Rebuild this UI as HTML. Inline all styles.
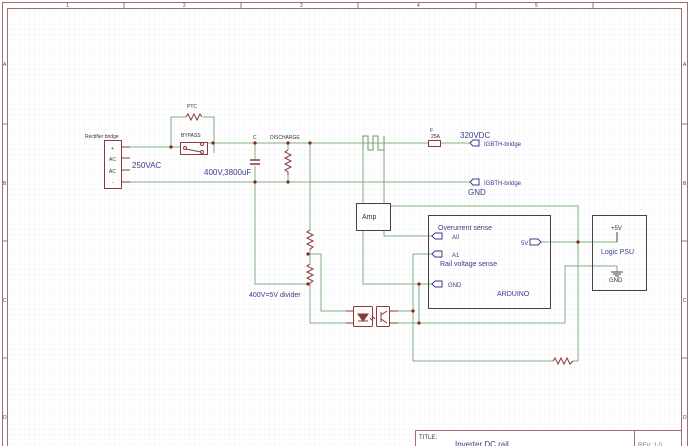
<!DOCTYPE html>
<html><head><meta charset="utf-8"><style>
html,body{margin:0;padding:0;background:#fff;width:690px;height:446px;overflow:hidden}
svg{display:block}
text{font-family:"Liberation Sans",sans-serif;fill:#3b3b8c}
</style></head><body>
<svg width="690" height="446" viewBox="0 0 690 446" xmlns="http://www.w3.org/2000/svg">
<defs>
<pattern id="g" width="5" height="5" patternUnits="userSpaceOnUse"><path d="M5 0V5M0 5H5" stroke="#eeeeee" stroke-width="0.6" fill="none"/></pattern>
</defs>
<rect width="690" height="446" fill="#fff"/>
<rect x="7" y="8" width="674" height="440" fill="url(#g)"/>
<!-- frame -->
<g stroke="#a07070" fill="none" stroke-width="1">
<rect x="2.5" y="2.5" width="685" height="450"/>
<rect x="7.5" y="8.5" width="674" height="440"/>
<path d="M124 3V8M241 3V8M358 3V8M476 3V8M593 3V8M3 124H7M3 241H7M3 358H7M682 124H687M682 241H687M682 358H687"/>
</g>
<g font-size="5" style="fill:#884444">
<text x="66" y="7">1</text><text x="183" y="7">2</text><text x="300" y="7">3</text><text x="417" y="7">4</text><text x="535" y="7">5</text>
<text x="3" y="66">A</text><text x="3" y="185">B</text><text x="3" y="302">C</text><text x="3" y="419">D</text>
<text x="683" y="66">A</text><text x="683" y="185">B</text><text x="683" y="302">C</text><text x="683" y="419">D</text>
</g>
<!-- wires -->
<g stroke="#7fb07f" fill="none" stroke-width="1">
<path d="M130 147H180M171 147V117H186M203 117H214V153M207 143H428M440 143H470"/>
<path d="M130 182H470"/>
<path d="M255 143V160M255 166V284H310"/>
<path d="M288 143V150M288 175V182"/>
<path d="M310 143V230M310 250V264M310 282V323H353"/>
<path d="M308 254H321V311H353"/>
<path d="M363 143V203M384 150V203"/>
<path d="M363 230V284H432M384 230V236H432"/>
<path d="M390 311H413V361H553M573 361H578V206H391"/>
<path d="M413 311V254H432"/>
<path d="M390 323H565V266H617M419 323V284"/>
<path d="M541 242H617V232"/>
<path d="M617 266V272"/>
</g>
<!-- coil -->
<path d="M363 150V136H368V150H373V136H378V150H384V136" stroke="#6a9a6a" fill="none"/>
<!-- components dark red -->
<g stroke="#8b3a3a" fill="none" stroke-width="1">
<rect x="104.5" y="140.5" width="17" height="48"/>
<path d="M122 147H130M122 158H130M122 170H130M122 182H130"/>
<path d="M186 117l2-3 3 6 3-6 3 6 3-6 2 3"/>
<rect x="180.5" y="142.5" width="27" height="12"/>
<circle cx="185" cy="148" r="1.5"/><circle cx="202" cy="144" r="1.5"/><circle cx="202" cy="152" r="1.5"/>
<path d="M186 149L201 152"/>
<path d="M250 160H260M250 164H260" stroke-width="1.5"/>
<path d="M288 150l-3 2 6 3-6 3 6 3-6 3 6 3-6 3 3 2V175"/>
<path d="M310 230l-3 2 6 3-6 3 6 3-6 3 6 3-3 2V250M310 264l-3 2 6 3-6 3 6 3-6 3 6 3-3 2"/>
<rect x="428.5" y="140.5" width="12" height="6" fill="none"/>
<path d="M553 361l2-3 3 6 3-6 3 6 3-6 3 6 3-3"/>
<rect x="353.5" y="306.5" width="19" height="20" rx="1"/>
<rect x="376.5" y="306.5" width="13" height="20" rx="1"/>
<path d="M346 311H353M346 323H353M390 311H398M390 323H398"/>
<path d="M358 314H368L363 321Z" fill="#8b3a3a"/><path d="M358 321H368M370 318l3 3M372 316l3 3"/>
<path d="M381 312V322M381 315l6-4M381 319l6 4"/>
</g>
<g fill="#8b2222">
<circle cx="171" cy="147" r="1.6"/><circle cx="213" cy="143" r="1.6"/><circle cx="255" cy="143" r="1.6"/><circle cx="255" cy="182" r="1.6"/><circle cx="288" cy="143" r="1.6"/><circle cx="288" cy="182" r="1.6"/><circle cx="310" cy="143" r="1.6"/><circle cx="308" cy="254" r="1.6"/><circle cx="308" cy="284" r="1.6"/><circle cx="413" cy="311" r="1.6"/><circle cx="419" cy="323" r="1.6"/><circle cx="419" cy="284" r="1.6"/><circle cx="578" cy="242" r="1.6"/>
</g>
<!-- boxes -->
<g stroke="#444" fill="none" stroke-width="1">
<rect x="356.5" y="203.5" width="34" height="27"/>
<rect x="428.5" y="215.5" width="122" height="93"/>
<rect x="592.5" y="215.5" width="54" height="75"/>
<path d="M617 232V242M611 272H623M613 274H621M615 276H619"/>
</g>
<!-- ports -->
<g stroke="#3b3b8c" fill="#fff" stroke-width="1">
<path d="M470 143l3-3h6v6h-6z"/><path d="M470 182l3-3h6v6h-6z"/>
<path d="M432 236l3-3h7v6h-7z"/><path d="M432 254l3-3h7v6h-7z"/><path d="M432 284l3-3h7v6h-7z"/>
<path d="M530 239h8l3 3-3 3h-8z"/>
</g>
<!-- text -->
<g font-size="5">
<text x="85" y="138" style="fill:#333">Rectifier bridge</text>
<text x="111" y="150" style="fill:#333">+</text><text x="109" y="161" style="fill:#333">AC</text><text x="109" y="173" style="fill:#333">AC</text><text x="112" y="184" style="fill:#333">-</text>
<text x="187" y="108" style="fill:#333">PTC</text><text x="181" y="137" style="fill:#333">BYPASS</text>
<text x="253" y="139" style="fill:#333">C</text><text x="270" y="139" style="fill:#333">DISCHARGE</text>
<text x="430" y="132" style="fill:#333">F</text><text x="431" y="138" style="fill:#333">25A</text>
</g>
<text x="132" y="168" font-size="8">250VAC</text>
<text x="204" y="175" font-size="8">400V,3800uF</text>
<text x="460" y="138" font-size="8">320VDC</text>
<text x="484" y="146" font-size="6" font-family="Liberation Serif">IGBTH-bridge</text>
<text x="484" y="185" font-size="6" font-family="Liberation Serif">IGBTH-bridge</text>
<text x="468" y="195" font-size="8">GND</text>
<text x="362" y="219" font-size="7" style="fill:#333">Amp</text>
<text x="438" y="230" font-size="7">Overurrent sense</text>
<text x="452" y="239" font-size="6" font-family="Liberation Serif">A0</text>
<text x="452" y="257" font-size="6" font-family="Liberation Serif">A1</text>
<text x="440" y="266" font-size="7">Rail voltage sense</text>
<text x="448" y="287" font-size="6" font-family="Liberation Serif">GND</text>
<text x="497" y="296" font-size="7">ARDUINO</text>
<text x="521" y="245" font-size="6" font-family="Liberation Serif">5V</text>
<text x="611" y="230" font-size="6" font-family="Liberation Serif" style="fill:#333">+5V</text>
<text x="601" y="254" font-size="7">Logic PSU</text>
<text x="609" y="282" font-size="6" font-family="Liberation Serif" style="fill:#333">GND</text>
<text x="249" y="297" font-size="7">400V=5V divider</text>
<!-- title block -->
<g stroke="#a07070" fill="#fff"><rect x="415.5" y="430.5" width="266" height="20"/><path d="M634.5 430V450"/></g>
<text x="419" y="439" font-size="6" style="fill:#333">TITLE:</text>
<text x="455" y="447" font-size="8">Inverter DC rail</text>
<text x="638" y="447" font-size="6" style="fill:#777">REV:  1.0</text>
</svg>
</body></html>
